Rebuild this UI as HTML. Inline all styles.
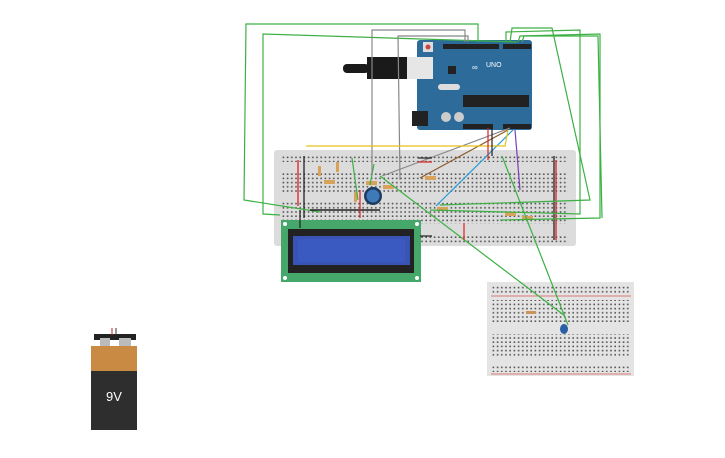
<!DOCTYPE html>
<html><head><style>body{margin:0;background:#fff;width:725px;height:453px;overflow:hidden}</style></head><body>
<svg width="725" height="453" viewBox="0 0 725 453" xmlns="http://www.w3.org/2000/svg" font-family="Liberation Sans, sans-serif">
<defs>
<pattern id="holes" width="4.2" height="4.2" patternUnits="userSpaceOnUse"><rect x="1.2" y="1.2" width="1.6" height="1.6" fill="#555"/></pattern>
</defs>
<!-- main breadboard -->
<rect x="274" y="150" width="302" height="96" rx="3" fill="#dcdcdc"/>
<rect x="282" y="154" width="286" height="8" fill="url(#holes)"/>
<rect x="282" y="172" width="286" height="22" fill="url(#holes)"/>
<rect x="282" y="202" width="286" height="22" fill="url(#holes)"/>
<rect x="282" y="235" width="286" height="8" fill="url(#holes)"/>
<line x1="298" y1="160" x2="298" y2="206" stroke="#d22" stroke-width="1.3"/>
<line x1="304" y1="156" x2="304" y2="218" stroke="#222" stroke-width="1.3"/>
<line x1="554" y1="156" x2="554" y2="240" stroke="#222" stroke-width="1.3"/>
<line x1="556" y1="160" x2="556" y2="240" stroke="#d22" stroke-width="1.3"/>
<!-- small breadboard -->
<rect x="487" y="282" width="147" height="94" fill="#e4e4e4"/>
<rect x="491" y="286" width="140" height="8" fill="url(#holes)"/>
<rect x="491" y="300" width="140" height="22" fill="url(#holes)"/>
<rect x="491" y="334" width="140" height="22" fill="url(#holes)"/>
<rect x="491" y="364" width="140" height="8" fill="url(#holes)"/>
<line x1="491" y1="296" x2="631" y2="296" stroke="#d55" stroke-width="0.7"/>
<line x1="491" y1="374" x2="631" y2="374" stroke="#d55" stroke-width="0.7"/>
<ellipse cx="564" cy="329" rx="4" ry="5" fill="#2a5fa8"/>
<rect x="526" y="311" width="10" height="3" fill="#c9935a"/>
<!-- Arduino -->
<rect x="417" y="40" width="115" height="90" rx="3" fill="#2d6c9a"/>
<rect x="443" y="44" width="56" height="5" fill="#222"/>
<rect x="503" y="44" width="28" height="5" fill="#222"/>
<rect x="463" y="95" width="66" height="12" fill="#222"/>
<rect x="463" y="124" width="30" height="5" fill="#222"/>
<rect x="503" y="124" width="28" height="5" fill="#222"/>
<rect x="412" y="111" width="16" height="15" fill="#222"/>
<circle cx="446" cy="117" r="5" fill="#ccc"/><circle cx="459" cy="117" r="5" fill="#ccc"/>
<rect x="438" y="84" width="22" height="6" rx="3" fill="#ddd"/>
<rect x="448" y="66" width="8" height="8" fill="#222"/>
<rect x="423" y="42" width="10" height="10" fill="#ddd"/><circle cx="428" cy="47" r="2.5" fill="#c44"/>
<text x="472" y="70" font-size="8" fill="#fff">∞</text>
<text x="486" y="67" font-size="7" fill="#fff">UNO</text>
<!-- USB -->
<rect x="405" y="57" width="28" height="22" fill="#e6e6e6"/>
<rect x="367" y="57" width="40" height="22" fill="#1a1a1a"/>
<rect x="343" y="64" width="26" height="9" rx="4" fill="#1a1a1a"/>
<!-- LCD -->
<rect x="281" y="220" width="140" height="62" fill="#45a86a"/>
<rect x="288" y="229" width="126" height="44" fill="#222"/>
<rect x="293" y="236" width="117" height="29" fill="#3a54b6"/>
<rect x="298" y="239" width="107" height="23" fill="#3c5fc8" opacity="0.6"/>
<circle cx="285" cy="224" r="2" fill="#fff"/><circle cx="417" cy="224" r="2" fill="#fff"/><circle cx="285" cy="278" r="2" fill="#fff"/><circle cx="417" cy="278" r="2" fill="#fff"/>
<!-- pot -->
<circle cx="373" cy="196" r="9" fill="#1e3b5e"/><circle cx="373" cy="196" r="6.5" fill="#3e7ab8"/>
<!-- resistors -->
<g fill="#d8a25a"><rect x="318" y="166" width="3" height="10"/><rect x="336" y="162" width="3" height="10"/><rect x="324" y="180" width="11" height="4"/><rect x="366" y="181" width="11" height="4"/><rect x="383" y="185" width="11" height="4"/><rect x="354" y="192" width="3" height="10"/><rect x="425" y="176" width="11" height="4"/><rect x="437" y="207" width="11" height="4"/><rect x="505" y="212" width="11" height="4"/><rect x="522" y="216" width="11" height="4"/></g>
<!-- wires -->
<g fill="none" stroke-width="1.2">
<polyline stroke="#3cb043" points="478,42 478,24 246,24 244,200 320,212"/>
<polyline stroke="#3cb043" points="280,215 263,214 263,34 517,42"/>
<polyline stroke="#3cb043" points="506,42 506,32 580,30 580,214 430,210"/>
<polyline stroke="#3cb043" points="510,42 512,28 552,28 590,200 440,205"/>
<polyline stroke="#3cb043" points="518,42 520,36 600,34 600,218 500,220"/>
<polyline stroke="#3cb043" points="522,42 524,36 598,36 602,218"/>
<polyline stroke="#3cb043" points="380,176 565,316"/>
<polyline stroke="#3cb043" points="502,156 568,325"/>
<polyline stroke="#3cb043" points="352,158 358,200"/><polyline stroke="#3cb043" points="374,164 370,185"/>
<polyline stroke="#888" points="372,175 372,30 465,30 465,42"/>
<polyline stroke="#888" points="400,180 398,36 468,36 468,42"/>
<polyline stroke="#888" points="382,176 510,128"/>
<polyline stroke="#8b5a2b" points="420,178 508,130"/>
<polyline stroke="#1e9ad6" points="436,206 513,130"/>
<polyline stroke="#e6c11a" points="306,146 505,146 508,130"/>
<polyline stroke="#7b3fb5" points="515,130 520,190"/>
<polyline stroke="#d22" points="488,128 488,160"/><polyline stroke="#222" points="492,128 492,156"/>
<polyline stroke="#222" points="300,210 300,228"/><polyline stroke="#222" stroke-width="1.6" points="310,210 380,210"/>
<polyline stroke="#d22" points="360,190 360,218"/><polyline stroke="#d22" points="464,223 464,240"/>
<polyline stroke="#222" points="418,158 432,158"/><polyline stroke="#d22" points="418,162 432,162"/>
<polyline stroke="#222" points="420,236 432,236"/>
</g>
<!-- battery -->
<rect x="94" y="334" width="42" height="6" fill="#222"/>
<rect x="100" y="338" width="10" height="8" fill="#bbb"/><rect x="119" y="338" width="12" height="8" fill="#bbb"/>
<rect x="91" y="346" width="46" height="25" fill="#c98a43"/>
<rect x="91" y="371" width="46" height="59" fill="#2e2e2e"/>
<text x="114" y="401" font-size="13" fill="#fff" text-anchor="middle">9V</text>
<line x1="112" y1="328" x2="112" y2="335" stroke="#c22"/><line x1="116" y1="328" x2="116" y2="335" stroke="#333"/>
</svg>
</body></html>
